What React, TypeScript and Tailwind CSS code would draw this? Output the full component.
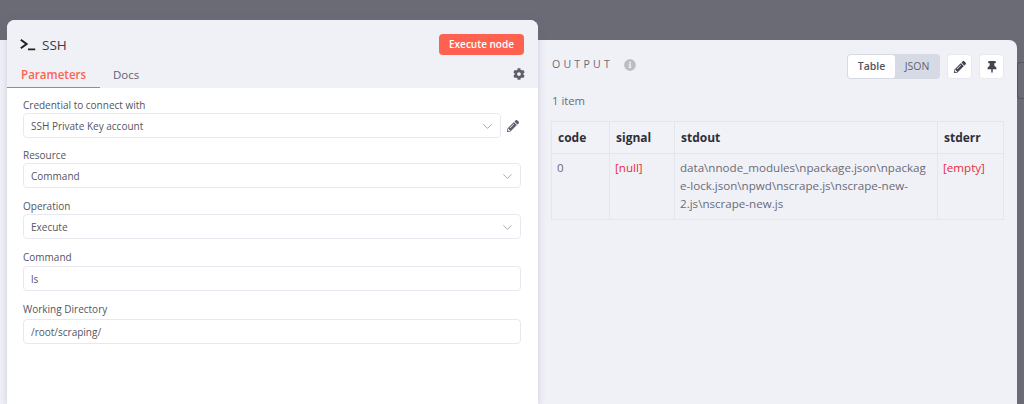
import { ChevronDown } from "lucide-react";
import { FaCog, FaInfoCircle, FaPencilAlt, FaThumbtack } from "react-icons/fa";

const font = { fontFamily: '"Open Sans", sans-serif' };

function Field({ label, value, select, labelClass }: { label: string; value: string; select?: boolean; labelClass: string }) {
  return (
    <div className="flex flex-col">
      <label className={`text-[10px] leading-[16px] text-[#54545f] ${labelClass}`}>{label}</label>
      <div className="h-[25px] w-[498px] bg-white border border-[#e8e9f0] rounded-[4px] flex items-center justify-between pt-[2px] pl-[7px] pr-[5px] text-[10px] text-[#55555f]">
        <span>{value}</span>
        {select && <ChevronDown size={15} strokeWidth={1} className="text-[#77777f]" />}
      </div>
    </div>
  );
}

function NodePanel() {
  return (
    <div className="relative z-10 ml-[7px] mt-[20px] w-[531px] h-[384px] bg-white rounded-t-[8px] shadow-[0_0_7px_rgba(100,100,135,0.28)] overflow-hidden shrink-0">
      <div className="h-[68px] bg-[#f0f1f7] flex flex-col">
        <div className="flex justify-between items-center pl-[13px] pr-[14px] pt-[14px]">
          <div className="flex items-center gap-[6px]">
            <svg width="16" height="12" viewBox="0 0 16 12" fill="none" stroke="#222" className="mt-[1px]">
              <path d="M0.8 0.8 L6.6 5 L0.8 9.2" strokeWidth="2" />
              <path d="M8 10.4 H15.2" strokeWidth="1.6" />
            </svg>
            <span className="text-[13.5px] leading-[20px] text-[#3a3a44]">SSH</span>
          </div>
          <button className="h-[21px] w-[85px] rounded-[4px] bg-[#ff6150] text-white text-[10px] font-semibold">
            Execute node
          </button>
        </div>
        <div className="flex justify-between items-end flex-1 pr-[13px]">
          <div className="flex">
            <div className="w-[93px] h-[23px] pl-[14px] text-[#ff6150] border-b border-[#ff6150] text-[11.6px] leading-[19px] font-semibold">
              Parameters
            </div>
            <div className="pl-[13px] text-[#62626e] text-[11.5px] leading-[19px] font-medium">Docs</div>
          </div>
          <FaCog size={12} className="text-[#5f5f6b] mb-[8px]" />
        </div>
      </div>
      <div className="flex flex-col gap-[10px] pl-[16px] pt-[9px]">
        <div className="flex flex-col mb-[-1px]">
          <label className="text-[10px] leading-[16px] text-[#54545f] h-[16px]">Credential to connect with</label>
          <div className="flex items-center gap-[6px]">
            <div className="h-[25px] w-[478px] bg-white border border-[#e8e9f0] rounded-[4px] flex items-center justify-between pt-[2px] pl-[7px] pr-[5px] text-[10px] text-[#55555f]">
              <span>SSH Private Key account</span>
              <ChevronDown size={15} strokeWidth={1} className="text-[#77777f]" />
            </div>
            <FaPencilAlt size={12} className="text-[#5f5f6b]" />
          </div>
        </div>
        <Field label="Resource" value="Command" select labelClass="h-[16px]" />
        <Field label="Operation" value="Execute" select labelClass="h-[16px]" />
        <Field label="Command" value="ls" labelClass="h-[17px]" />
        <Field label="Working Directory" value="/root/scraping/" labelClass="h-[18px]" />
      </div>
    </div>
  );
}

function OutputPanel() {
  return (
    <div className="flex-1 pl-[14px] pr-[21px] pt-[14px] mt-[40px]">
      <div className="flex justify-between items-start h-[28px]">
        <div className="flex items-center gap-[11px] h-[22px]">
          <span className="text-[10.6px] font-medium tracking-[3.2px] text-[#6b6b76]">OUTPUT</span>
          <FaInfoCircle size={12} className="text-[#bcbcc2]" />
        </div>
        <div className="flex items-start gap-[7px]">
          <div className="flex h-[25px] w-[93px] rounded-[4px] bg-[#d6dae4] p-[1px] text-[10.5px]">
            <div className="w-[47px] bg-white rounded-[3px] flex items-center justify-center font-semibold text-[#54545f]">Table</div>
            <div className="flex-1 flex items-center justify-center text-[#62626e]">JSON</div>
          </div>
          <div className="w-[25px] h-[25px] bg-white border border-[#e8e9f0] rounded-[4px] flex items-center justify-center">
            <FaPencilAlt size={12} className="text-[#44444e]" />
          </div>
          <div className="w-[25px] h-[25px] bg-white border border-[#e8e9f0] rounded-[4px] flex items-center justify-center">
            <FaThumbtack size={12} className="text-[#44444e]" />
          </div>
        </div>
      </div>
      <div className="text-[11.3px] leading-[16px] text-[#6b6b76] mt-[11px] mb-[12px]">1 item</div>
      <table className="ml-[-1px] w-[452px] table-fixed border-collapse text-[11.6px] text-[#6b6b76]">
        <colgroup>
          <col className="w-[58px]" />
          <col className="w-[65px]" />
          <col className="w-[263px]" />
          <col className="w-[66px]" />
        </colgroup>
        <thead>
          <tr className="h-[32px] bg-[#f1f2f8]">
            {["code", "signal", "stdout", "stderr"].map((h) => (
              <th key={h} className="border border-[#e4e6ee] text-left text-[12px] font-bold text-[#2f2f38] pl-[6px] pr-0">
                {h}
              </th>
            ))}
          </tr>
        </thead>
        <tbody>
          <tr className="h-[66px] align-top leading-[18px]">
            <td className="border border-[#e4e6ee] pl-[5px] pt-[5px]">0</td>
            <td className="border border-[#e4e6ee] pl-[5px] pt-[5px] text-[#ea2a3c]">[null]</td>
            <td className="border border-[#e4e6ee] pl-[5px] pt-[5px] whitespace-nowrap">
              data\nnode_modules\npackage.json\npackag
              <br />
              e-lock.json\npwd\nscrape.js\nscrape-new-
              <br />
              2.js\nscrape-new.js
            </td>
            <td className="border border-[#e4e6ee] pl-[5px] pt-[5px] text-[#ea2a3c]">[empty]</td>
          </tr>
        </tbody>
      </table>
    </div>
  );
}

export default function App() {
  return (
    <div className="relative w-[1024px] h-[404px] overflow-hidden bg-[#6b6b76]" style={font}>
      {/* fundo do painel de output, fica atras do painel do node */}
      <div className="absolute left-0 top-[40px] w-[1017px] h-[364px] bg-[#f0f1f7] rounded-tr-[8px]" />
      <div className="absolute right-0 top-[62px] w-[7px] h-[37px] border border-r-0 border-[#55555f] rounded-l-[3px]" />
      <div className="relative flex">
        <NodePanel />
        <OutputPanel />
      </div>
    </div>
  );
}
